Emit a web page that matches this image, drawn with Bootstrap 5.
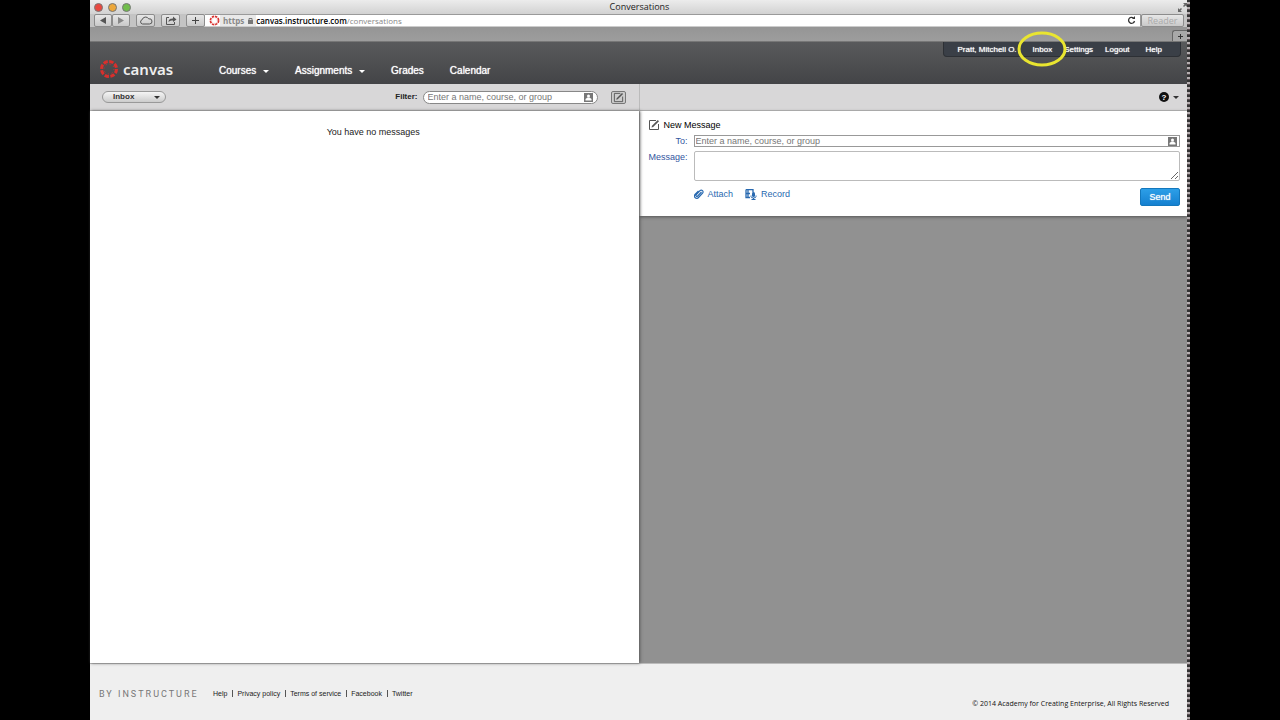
<!DOCTYPE html>
<html lang="en">
<head>
<meta charset="utf-8">
<meta name="viewport" content="width=device-width, initial-scale=1">
<title>Conversations</title>
<link href="https://cdn.jsdelivr.net/npm/bootstrap@5.3.0/dist/css/bootstrap.min.css" rel="stylesheet">
<style>
body{background:#000;font-family:"Liberation Sans",Arial,sans-serif;font-size:9px;line-height:12px;color:#222}
a{text-decoration:none;color:inherit}
button,input,textarea{font:inherit}
svg{display:block;flex:none}
.screen{margin:0 90px;background:#999}
.edge{width:3px;background:repeating-linear-gradient(#333 0 2px,#b5aeb0 2px 4px,#5b5054 4px 5px)}
.chrome-font{font-family:"Open Sans","Noto Sans",sans-serif}
.titlebar{height:14px;background:linear-gradient(#ececec,#d2d2d2);padding:0 0 0 4px}
.window-title{padding-right:30px}
.lights{gap:5px}
.light{width:9px;height:9px;border-radius:50%;border:1px solid #777}
.red{background:#e8483f}.amber{background:#eda83b}.green{background:#71bd4b}
.addressbar{height:13px;background:#c4c4c4;padding:0 3px 0 4px}
.tool{height:13px;border:1px solid #8c8c8c;border-radius:2px;background:linear-gradient(#e6e6e6,#c9c9c9);color:#555;padding:0;display:flex;align-items:center;justify-content:center;width:19px}
.tool-nav{width:18px}
.tool-reader{width:43px;color:#aaa}
.tool-group{gap:6px;margin:0 6px}
.address{height:13px;background:#fff;border:1px solid #9a9a9a;border-left:0;border-bottom-color:#ccc;font-size:8px;font-weight:600;color:#888}
.secure{background:#e9e9e9;height:11px;padding:0 3px;font-weight:700}
.path{font-weight:400}
.tabs{height:15px;background:linear-gradient(#959595,#9d9d9d);border-bottom:1px solid #777}
.newtab{width:15px;height:11px;border:1px solid #666;border-width:1px 0 0 1px;border-radius:3px 0 0 0;background:#a8a8a8;color:#444}
.masthead{height:42px;background:linear-gradient(#595a5c,#434447);position:relative;color:#fff}
.brand{width:117px;height:42px;padding:12px 0 0 9px;font:600 15px/18px "Noto Sans",sans-serif;color:#eee}
.menu{font-size:10px;line-height:12px;text-shadow:0 0 1px #fff;padding-top:23px;gap:26px}
.down{border:3px solid transparent;border-top:3px solid currentColor;border-bottom:0;display:inline-block;vertical-align:1px}
.account{position:absolute;right:6px;top:0;height:15px;background:#3a3f47;border:1px solid #2d3035;border-top:0;border-radius:0 0 4px 4px;font-size:8px;line-height:15px;text-shadow:0 0 1px #fff;padding:0 18px 0 13px}
.ring{position:absolute;left:50%;top:50%;transform:translate(-50%,-50%);z-index:2}
.strip{height:27px;background:#d8d7d8;border-bottom:1px solid #bbb}
.divider{border-left:1px solid #bbb}
.mailbox{width:64px;height:12px;border:1px solid #999;border-radius:8px;background:linear-gradient(#f5f5f5,#ccc);font-size:8px;line-height:10px;font-weight:bold;color:#333;padding:0 5px 0 10px}
.filter-label{font-size:8px;font-weight:bold;margin-right:5px}
.filter{width:175px;height:13px;border:1px solid #888;border-radius:8px;background:#fff;padding:0 4px;margin-right:13px}
.plain{border:0;padding:0;background:none;outline:0;min-width:0;color:#333}
.plain::placeholder{color:#777;opacity:1}
.compose-btn{width:15px;height:13px;border:1px solid #777;border-radius:2px;background:#ccc;color:#555;padding:0;display:flex;align-items:center;justify-content:center;margin-right:5px}
.inboxpane{background:#fff;padding:15px 0 0 18px;box-shadow:1px 0 3px #555;position:relative;z-index:1}
.thread{background:#919191}
.composer{background:#fff;height:105px;padding:8px 7px 0 8px;box-shadow:0 1px 3px #555;border-left:1px solid #bbb}
.pencil{color:#555}
.caption{width:40px;text-align:right;color:#3355a0;margin-right:6px}
.recipient{height:12px;border:1px solid #999;padding:0 2px 0 1px}
.message{height:30px;border:1px solid #bbb;border-radius:2px;resize:vertical;display:block;padding:2px}
.actions{color:#2869b0;padding-left:46px;padding-top:7px}
.send{width:40px;height:18px;border:1px solid #1478bd;border-radius:2px;background:linear-gradient(#2d9fe8,#1580d0);color:#fff;padding:0;line-height:14px;text-shadow:0 0 1px #fff}
.site-footer{height:57px;background:#efefef;border-top:1px solid #bbb;position:relative;padding:3px 18px 0 9px;font-size:7px}
.maker{font:9px/12px Roboto,sans-serif;letter-spacing:2px;color:#777;width:114px}
.footer-links{line-height:8px}
.footer-links a+a{border-left:1px solid #555;margin-left:5px;padding-left:4px}
.rights{font-family:"Open Sans",sans-serif;font-size:7px;color:#111;position:absolute;right:18px;bottom:10px}
</style>
</head>
<body>
<svg class="d-none">
 <symbol id="burst" viewBox="0 0 20 20"><circle cx="10" cy="10" r="7.5" fill="none" stroke="#d8302d" stroke-width="3" stroke-dasharray="4.4 1.49"/><circle cx="10" cy="10" r="5" fill="none" stroke="#d8302d" stroke-width="1" stroke-dasharray="1 2.93"/></symbol>
 <symbol id="pencil" viewBox="0 0 12 12"><path d="M8 1.500H1.500v9h9V5" fill="none" stroke="currentColor"/><path d="M3.500 8.500 4 6.800 9.800 1l1.200 1.200L5.200 8z" fill="currentColor"/></symbol>
 <symbol id="contact" viewBox="0 0 9 9"><path d="M0 0h9v9H0z" fill="#777"/><circle cx="4.500" cy="3" r="1.500" fill="#fff"/><path d="M1.500 7.500V6l2-1.500h2l2 1.500v1.500z" fill="#fff"/></symbol>
</svg>
<div class="screen d-flex min-vh-100">
 <div class="flex-grow-1 d-flex flex-column">
  <header class="chrome-font">
   <div class="titlebar d-flex align-items-center">
    <div class="lights d-flex"><span class="light red"></span><span class="light amber"></span><span class="light green"></span></div>
    <div class="window-title flex-grow-1 text-center">Conversations</div>
    <svg width="9" height="9" viewBox="0 0 9 9" fill="#666"><path d="M5 0h4v4L7.600 2.600 6 4 5 3l1.500-1.500zM4 9H0V5l1.400 1.400L3 5l1 1-1.500 1.500z"/></svg>
   </div>
   <div class="addressbar d-flex align-items-center">
    <button class="tool tool-nav" aria-label="Back"><svg width="8" height="7"><path d="M7 0v7L1 3.500z" fill="#555"/></svg></button>
    <button class="tool tool-nav" aria-label="Forward"><svg width="8" height="7"><path d="M1 0v7l6-3.500z" fill="#888"/></svg></button>
    <div class="tool-group d-flex">
     <button class="tool" aria-label="Cloud tabs"><svg width="14" height="9" viewBox="0 0 14 9"><path d="M3.500 8a2.200 2.200 0 0 1-.3-4.300A3.500 3.500 0 0 1 9.700 2.900 2.600 2.600 0 1 1 10.500 8z" fill="none" stroke="#555"/></svg></button>
     <button class="tool" aria-label="Share"><svg width="12" height="9" viewBox="0 0 12 9"><path d="M4 1.500H1.500v7h8V6" fill="none" stroke="#555"/><path d="M3.500 6C3.500 3 6 2.500 8 2.500V.5l3.500 3L8 6V4.500C6 4.500 5 4.500 3.500 6" fill="#555"/></svg></button>
    </div>
    <button class="tool" aria-label="Add bookmark"><svg width="7" height="7"><path d="M3.500 0v7M0 3.500h7" stroke="#444"/></svg></button>
    <div class="address d-flex align-items-center flex-grow-1">
     <svg class="ms-1" width="11" height="11"><use href="#burst"/></svg>
     <span class="secure d-flex align-items-center gap-1"><span>https</span><svg width="5" height="7"><path d="M0 3h5v4H0z" fill="#777"/><path d="M1 3V1.500h3V3" fill="none" stroke="#777"/></svg></span>
     <span class="flex-grow-1"><span class="text-black">canvas.instructure.com</span><span class="path">/conversations</span></span>
     <svg class="me-1" width="9" height="9" viewBox="0 0 9 9"><path d="M6.500 2A3 3 0 1 0 7.500 5" fill="none" stroke="#333" stroke-width="1.300"/><path d="M5 3h3V0z" fill="#333"/></svg>
    </div>
    <button class="tool tool-reader">Reader</button>
   </div>
   <div class="tabs d-flex justify-content-end align-items-end"><button class="newtab p-0 d-flex align-items-center justify-content-center" aria-label="New tab"><svg width="5" height="5"><path d="M2.500 0v5M0 2.500h5" stroke="#333"/></svg></button></div>
  </header>
  <nav class="masthead d-flex align-items-start">
   <a href="#" class="brand d-flex align-items-center"><svg class="me-1" width="20" height="20"><use href="#burst"/></svg>canvas</a>
   <div class="menu d-flex ps-2 ms-1">
    <a href="#">Courses <i class="down ms-1"></i></a><a href="#">Assignments <i class="down ms-1"></i></a><a href="#">Grades</a><a href="#">Calendar</a>
   </div>
   <div class="account d-flex">
    <a href="#">Pratt, Mitchell O.</a>
    <a href="#" class="position-relative ms-3">Inbox<svg class="ring" width="52" height="38"><ellipse cx="26" cy="19" rx="23" ry="16" fill="none" stroke="#e9e530" stroke-width="3"/></svg></a>
    <a href="#" class="ms-2 ps-1">Settings</a><a href="#" class="ms-2 ps-1">Logout</a><a href="#" class="ms-3">Help</a>
   </div>
  </nav>
  <div class="row g-0 strip">
   <div class="col-6 d-flex align-items-center ps-2 pe-2">
    <button class="mailbox ms-1 d-flex align-items-center justify-content-between">Inbox <i class="down"></i></button>
    <label for="filter" class="filter-label ms-auto">Filter:</label>
    <div class="filter d-flex align-items-center"><input id="filter" class="plain flex-grow-1" placeholder="Enter a name, course, or group"><svg width="9" height="9"><use href="#contact"/></svg></div>
    <button class="compose-btn" aria-label="Compose"><svg width="11" height="11"><use href="#pencil"/></svg></button>
   </div>
   <div class="col-6 divider d-flex align-items-center justify-content-end pe-2"><button class="plain d-flex align-items-center gap-1" aria-label="Help"><svg width="10" height="10"><circle cx="5" cy="5" r="5" fill="#111"/><text x="5" y="8" text-anchor="middle" font-size="8" font-weight="bold" fill="#fff">?</text></svg><i class="down"></i></button></div>
  </div>
  <main class="row g-0 flex-grow-1">
   <section class="col-6 inboxpane text-center">You have no messages</section>
   <section class="col-6 thread">
    <form class="composer">
     <div class="d-flex align-items-center text-black"><svg class="pencil me-1" width="12" height="12"><use href="#pencil"/></svg>New Message</div>
     <div class="d-flex align-items-center mt-1"><label for="to" class="caption">To:</label><div class="recipient flex-grow-1 d-flex align-items-center"><input id="to" class="plain flex-grow-1" placeholder="Enter a name, course, or group"><svg width="9" height="9"><use href="#contact"/></svg></div></div>
     <div class="d-flex mt-1"><label for="body" class="caption">Message:</label><textarea id="body" class="message flex-grow-1"></textarea></div>
     <div class="actions d-flex align-items-start">
      <a href="#" class="d-flex align-items-center"><svg class="me-1" width="10" height="10" viewBox="0 0 10 10"><path d="M7.500 3 3.500 7.200a1 1 0 0 1-1.400-1.400L6 1.700a1.700 1.700 0 0 1 2.600 2.400L4.500 8.500A2.200 2.200 0 0 1 1 5.500L4.500 2" fill="none" stroke="#2869b0" stroke-width="1.200"/></svg>Attach</a>
      <a href="#" class="d-flex align-items-center ms-2 ps-1"><svg class="me-1" width="12" height="11" viewBox="0 0 12 11"><path d="M1 .5h7v3M1 .5v8h4M1 4.500h4M3 .5v8" fill="none" stroke="#2869b0" stroke-width="1.300"/><rect x="7" y="3" width="3" height="5" rx="1.500" fill="#2869b0"/><path d="M6 6.500v1q0 1.500 2.500 1.500T11 7.500v-1M8.500 9v1.500M6.500 10.500h4" fill="none" stroke="#2869b0"/></svg>Record</a>
      <button type="button" class="send ms-auto">Send</button>
     </div>
    </form>
   </section>
  </main>
  <footer class="site-footer d-flex align-items-center">
   <span class="maker">BY INSTRUCTURE</span>
   <span class="footer-links"><a href="#">Help</a><a href="#">Privacy policy</a><a href="#">Terms of service</a><a href="#">Facebook</a><a href="#">Twitter</a></span>
   <span class="rights">© 2014 Academy for Creating Enterprise, All Rights Reserved</span>
  </footer>
 </div>
 <div class="edge"></div>
</div>
<script src="https://cdn.jsdelivr.net/npm/bootstrap@5.3.0/dist/js/bootstrap.bundle.min.js"></script>
</body>
</html>
